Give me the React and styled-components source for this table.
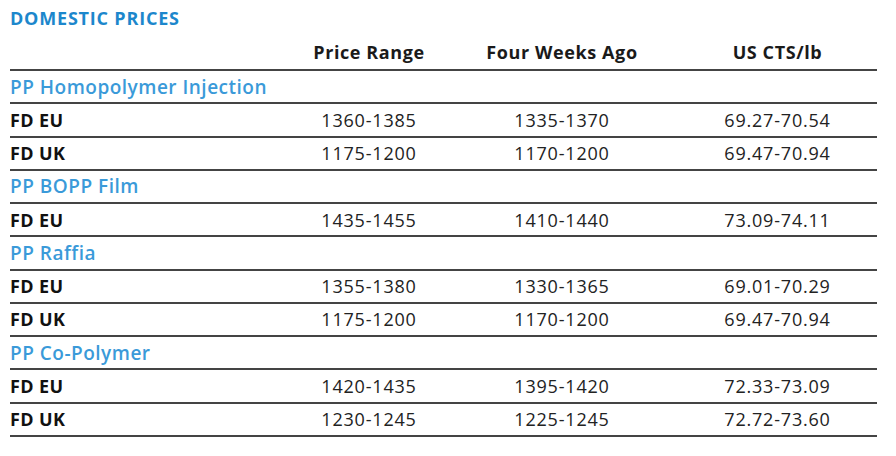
import React from 'react';
import styled, { createGlobalStyle } from 'styled-components';

const GlobalStyle = createGlobalStyle`
  body {
    margin: 0;
    background: #ffffff;
    font-family: "Open Sans", "Liberation Sans", sans-serif;
  }
`;

const Page = styled.div`
  width: 896px;
  height: 456px;
  padding: 6px 19px 0 10px;
  box-sizing: border-box;
`;

const Title = styled.div`
  color: #1c87cc;
  font-weight: 700;
  font-size: 18px;
  letter-spacing: 0.8px;
  line-height: 24px;
  height: 28px;
`;

const Grid = `
  display: grid;
  grid-template-columns: 260px 200px 208px 199px;
  align-items: center;
`;

const HeadRow = styled.div`
  ${Grid}
  height: 37px;
  font-weight: 700;
  font-size: 18px;
  letter-spacing: 0.6px;
  color: #1a1a1a;
  border-bottom: 2px solid #444;
  box-sizing: border-box;
`;

const Row = styled.div`
  ${Grid}
  height: 33.27px;
  box-sizing: border-box;
  border-bottom: 2px solid #444;
  font-size: 18px;
  letter-spacing: 0.8px;
  color: #222;
`;

const Section = styled.div`
  height: 33.27px;
  box-sizing: border-box;
  border-bottom: 2px solid #444;
  display: flex;
  align-items: center;
  color: #3a9ad9;
  font-weight: 600;
  font-size: 19px;
  letter-spacing: 0.5px;
`;

const Label = styled.div`
  font-weight: 700;
  color: #111;
  letter-spacing: 0.4px;
`;

const Cell = styled.div`
  text-align: center;
  padding-right: ${({ $shift }) => $shift || 0}px;
`;

const data = [
  {
    name: 'PP Homopolymer Injection',
    rows: [
      ['FD EU', '1360-1385', '1335-1370', '69.27-70.54'],
      ['FD UK', '1175-1200', '1170-1200', '69.47-70.94'],
    ],
  },
  {
    name: 'PP BOPP Film',
    rows: [['FD EU', '1435-1455', '1410-1440', '73.09-74.11']],
  },
  {
    name: 'PP Raffia',
    rows: [
      ['FD EU', '1355-1380', '1330-1365', '69.01-70.29'],
      ['FD UK', '1175-1200', '1170-1200', '69.47-70.94'],
    ],
  },
  {
    name: 'PP Co-Polymer',
    rows: [
      ['FD EU', '1420-1435', '1395-1420', '72.33-73.09'],
      ['FD UK', '1230-1245', '1225-1245', '72.72-73.60'],
    ],
  },
];

const App = () => {
  return (
    <Page>
      <GlobalStyle />
      <Title>DOMESTIC PRICES</Title>
      <HeadRow>
        <div />
        <Cell $shift={2}>Price Range</Cell>
        <Cell $shift={24}>Four Weeks Ago</Cell>
        <Cell>US CTS/lb</Cell>
      </HeadRow>
      {data.map((group) => (
        <React.Fragment key={group.name}>
          <Section>{group.name}</Section>
          {group.rows.map((r, i) => (
            <Row key={i}>
              <Label>{r[0]}</Label>
              <Cell $shift={2}>{r[1]}</Cell>
              <Cell $shift={24}>{r[2]}</Cell>
              <Cell>{r[3]}</Cell>
            </Row>
          ))}
        </React.Fragment>
      ))}
    </Page>
  );
};

export default App;
